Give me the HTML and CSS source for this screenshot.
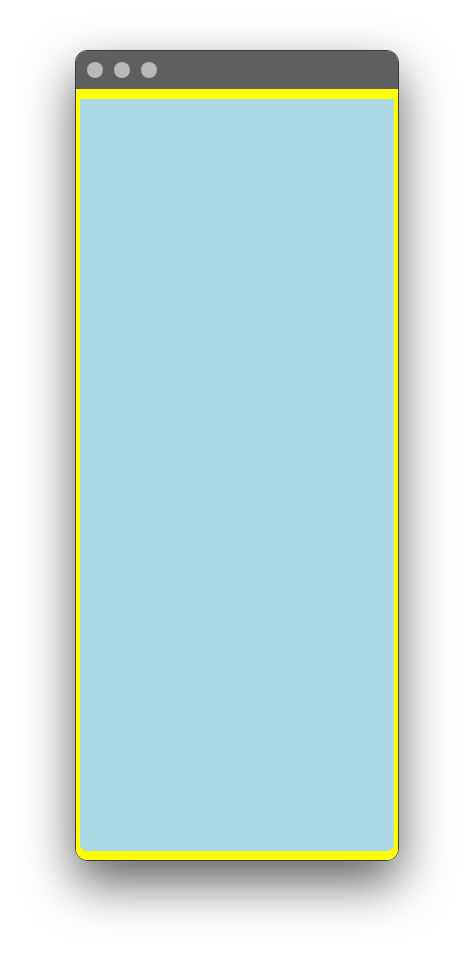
FILE: index.html
```html
<!DOCTYPE html>
<html>
<head>
<meta charset="utf-8">
<link rel="stylesheet" href="styles.css">
</head>
<body>
<div class="stage">
  <div class="window">
    <div class="titlebar">
      <span class="dot"></span>
      <span class="dot"></span>
      <span class="dot"></span>
    </div>
    <div class="frame">
      <div class="content"></div>
    </div>
  </div>
</div>
</body>
</html>
```
FILE: styles.css
```css
html, body {
  margin: 0;
  padding: 0;
  background: #ffffff;
}
.stage {
  width: 474px;
  height: 961px;
  display: flex;
  justify-content: center;
  align-items: flex-start;
  padding-top: 50px;
  box-sizing: border-box;
}
.window {
  width: 324px;
  height: 811px;
  box-sizing: border-box;
  border: 1px solid #3c3c3c;
  border-radius: 12px;
  overflow: hidden;
  display: flex;
  flex-direction: column;
  box-shadow: 0 22px 50px rgba(0, 0, 0, 0.62);
}
.titlebar {
  height: 38px;
  flex: none;
  background: #5e5f61;
  display: flex;
  align-items: center;
  gap: 11px;
  padding-left: 11px;
}
.dot {
  width: 16px;
  height: 16px;
  border-radius: 50%;
  background: #b9b9b9;
}
.frame {
  flex: 1;
  background: #ffff00;
  padding: 10px 4px 9px 4px;
  display: flex;
  border-radius: 0 0 11px 11px;
}
.content {
  flex: 1;
  background: #add8e6;
  border-radius: 0 0 7px 7px;
}
```
